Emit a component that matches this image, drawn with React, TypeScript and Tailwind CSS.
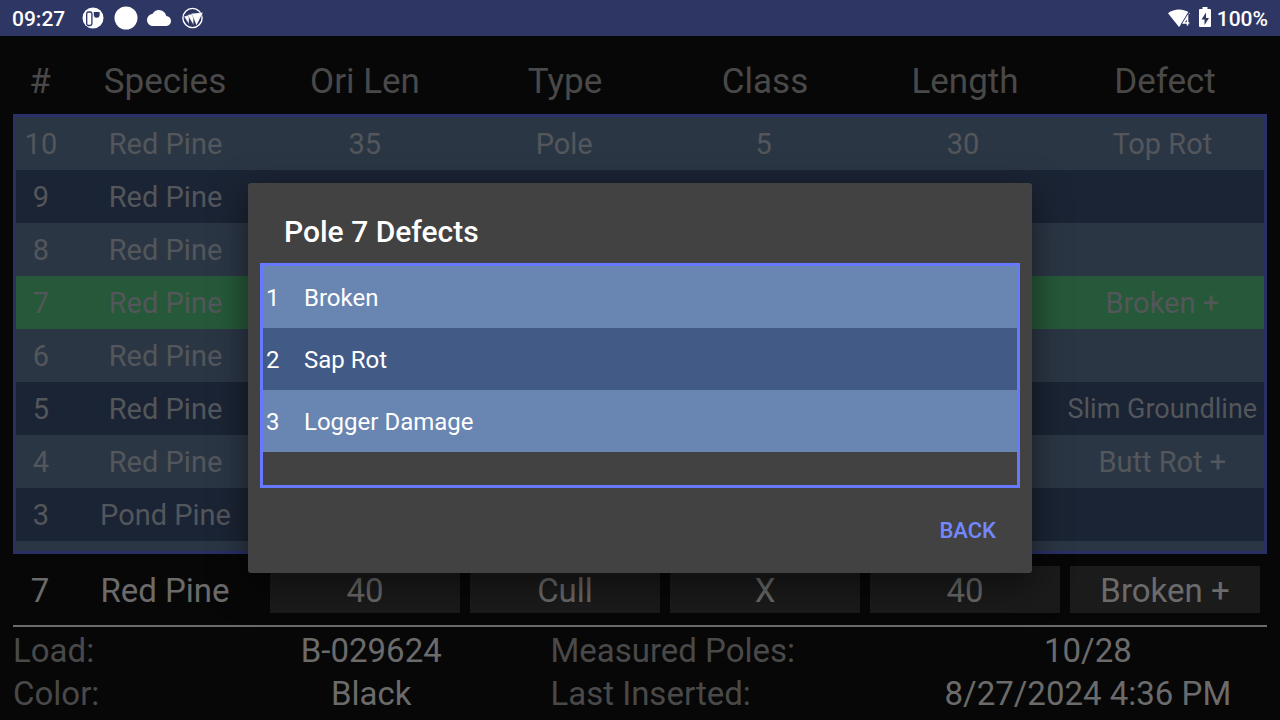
const columns = ["#", "Species", "Ori Len", "Type", "Class", "Length", "Defect"];

const poles = [
  ["10", "Red Pine", "35", "Pole", "5", "30", "Top Rot"],
  ["9", "Red Pine", "", "", "", "", ""],
  ["8", "Red Pine", "", "", "", "", ""],
  ["7", "Red Pine", "", "", "", "", "Broken +"],
  ["6", "Red Pine", "", "", "", "", ""],
  ["5", "Red Pine", "", "", "", "", "Slim Groundline"],
  ["4", "Red Pine", "", "", "", "", "Butt Rot +"],
  ["3", "Pond Pine", "", "", "", "", ""],
  ["", "", "", "", "", "", ""],
];

const defects = ["Broken", "Sap Rot", "Logger Damage"];

function rowColor(id: string, index: number) {
  if (id === "7") return "bg-[#265939]";
  return index % 2 === 0 ? "bg-[#2b3645]" : "bg-[#1b2434]";
}

function StatusBar() {
  return (
    <header className="flex h-9 shrink-0 items-center justify-between bg-[#2e3664] px-3 text-[21px] leading-8 font-medium text-white">
      <div className="flex items-center">
        <span className="mr-4 pt-0.5">09:27</span>
        <div className="flex items-center gap-[9px]">
          <svg className="size-6" viewBox="0 0 24 24">
            <circle cx="12" cy="12" r="10.5" fill="#fff" />
            <rect x="5.7" y="6" width="5.2" height="13.5" rx="1.8" fill="#fff" stroke="#2e3664" strokeWidth="1.3" />
            <path d="M12.8 6h5.8v2.8a2.9 2.9 0 0 1-5.8 0z" fill="#2e3664" />
          </svg>
          <svg className="size-6" viewBox="0 0 24 24">
            <circle cx="12" cy="12" r="11.5" fill="#fff" />
          </svg>
          <svg className="size-6" viewBox="0 0 24 24">
            <path
              d="M19.35 10.04A7.49 7.49 0 0 0 12 4C9.11 4 6.6 5.64 5.35 8.04A5.994 5.994 0 0 0 0 14c0 3.31 2.69 6 6 6h13c2.76 0 5-2.24 5-5 0-2.64-2.05-4.78-4.65-4.96z"
              fill="#fff"
            />
          </svg>
          <svg className="size-6" viewBox="0 0 24 24">
            <circle cx="12.5" cy="12" r="9.6" fill="none" stroke="#fff" strokeWidth="1.4" />
            <g fill="#fff" stroke="#2e3664" strokeWidth="0.3">
              <path d="M4 10.5l5-1.500v9z" />
              <path d="M7.500 9l6-1.500V19z" />
              <path d="M11.500 7.500L23 6.500l-6.500 13z" />
            </g>
          </svg>
        </div>
      </div>
      <div className="flex items-center">
        <svg className="mr-1.5 size-6" viewBox="0 0 24 24">
          <path d="M1 7.2C7.5 2.3 16.5 2.3 23 7.2L12 21z" fill="#fff" />
          <path d="M20.500 19.500v-9L16.500 17h5.800" fill="none" stroke="#2e3664" strokeWidth="3.4" />
          <path d="M20.500 19.500v-9L16.500 17h5.800" fill="none" stroke="#fff" strokeWidth="1.6" />
        </svg>
        <svg className="mr-1 h-6 w-4" viewBox="0 0 16 24">
          <path
            d="M5.5 1h5v2H13a1 1 0 0 1 1 1v16a1 1 0 0 1-1 1H3a1 1 0 0 1-1-1V4a1 1 0 0 1 1-1h2.5z"
            fill="#fff"
          />
          <path d="M9 6.5l-4.5 7h3V19l4.5-7H9z" fill="#2e3664" />
        </svg>
        <span className="pt-0.5">100%</span>
      </div>
    </header>
  );
}

function PoleTable() {
  return (
    <table className="flex min-h-0 flex-1 flex-col">
      <thead className="block px-[15px]">
        <tr className="grid h-[78px] grid-cols-[1fr_repeat(6,4fr)] items-center pt-3.5 text-[35px] leading-10 text-[#494949]">
          {columns.map((name) => (
            <th key={name} className="font-normal">
              {name}
            </th>
          ))}
        </tr>
      </thead>
      <tbody className="mx-[13px] flex min-h-0 flex-1 flex-col overflow-hidden border-[3px] border-[#292f67]">
        {poles.map((pole, i) => (
          <tr
            key={i}
            className={`grid h-[53px] shrink-0 grid-cols-[1fr_repeat(6,4fr)] items-center pr-0.5 text-center text-[29px] leading-9 text-[#53565b] ${rowColor(pole[0], i)}`}
          >
            {pole.map((value, j) => (
              <td key={j} className={value.length > 12 ? "text-[27px] whitespace-nowrap" : ""}>
                {value}
              </td>
            ))}
          </tr>
        ))}
      </tbody>
    </table>
  );
}

function EditRow() {
  return (
    <div className="mt-3 grid grid-cols-[1fr_repeat(6,4fr)] px-[15px] text-center text-[33px] leading-[45px] text-[#6b6b6b]">
      <span className="pt-0.5">7</span>
      <span className="pt-0.5">Red Pine</span>
      {["40", "Cull", "X", "40", "Broken +"].map((value, i) => (
        <button key={i} className="mx-[5px] h-[47px] bg-[#1b1b1b] pt-0.5">
          {value}
        </button>
      ))}
    </div>
  );
}

function Summary() {
  return (
    <dl className="mx-[13px] mt-3 grid grid-cols-[1fr_2fr_2fr_2fr] border-t-2 border-[#6b6b6b] pt-0.5 pb-[5px] text-[33px] leading-[43px] text-[#6b6b6b]">
      <dt className="text-[#494949]">Load:</dt>
      <dd className="text-center">B-029624</dd>
      <dt className="text-[#494949]">Measured Poles:</dt>
      <dd className="text-center">10/28</dd>
      <dt className="text-[#494949]">Color:</dt>
      <dd className="text-center">Black</dd>
      <dt className="text-[#494949]">Last Inserted:</dt>
      <dd className="text-center">8/27/2024 4:36 PM</dd>
    </dl>
  );
}

function DefectDialog() {
  return (
    <div className="absolute inset-0 flex items-center justify-center">
      <div
        role="dialog"
        aria-labelledby="defects-title"
        className="w-[784px] rounded-[3px] bg-[#424242] px-3 shadow-[0_12px_36px_rgba(0,0,0,0.5)]"
      >
        <h2 id="defects-title" className="px-6 pt-[29px] pb-[11px] text-[30px] leading-10 font-medium text-white">
          Pole 7 Defects
        </h2>
        <ol className="h-[225px] border-[3px] border-[#6679ff] text-2xl text-white">
          {defects.map((name, i) => (
            <li
              key={name}
              className={`flex h-[62px] items-center px-[3px] pt-0.5 ${i % 2 === 0 ? "bg-[#6985b1]" : "bg-[#415a86]"}`}
            >
              <span className="w-[38px]">{i + 1}</span>
              <span>{name}</span>
            </li>
          ))}
        </ol>
        <div className="flex h-[85px] items-center justify-end px-3">
          <button className="px-3 py-2 text-[22px] leading-7 font-medium text-[#7387ff]">BACK</button>
        </div>
      </div>
    </div>
  );
}

export default function App() {
  return (
    <div className="flex h-screen flex-col bg-[#070707] font-[Roboto,sans-serif]">
      <StatusBar />
      <main className="relative flex min-h-0 flex-1 flex-col">
        <PoleTable />
        <EditRow />
        <Summary />
        <DefectDialog />
      </main>
    </div>
  );
}
